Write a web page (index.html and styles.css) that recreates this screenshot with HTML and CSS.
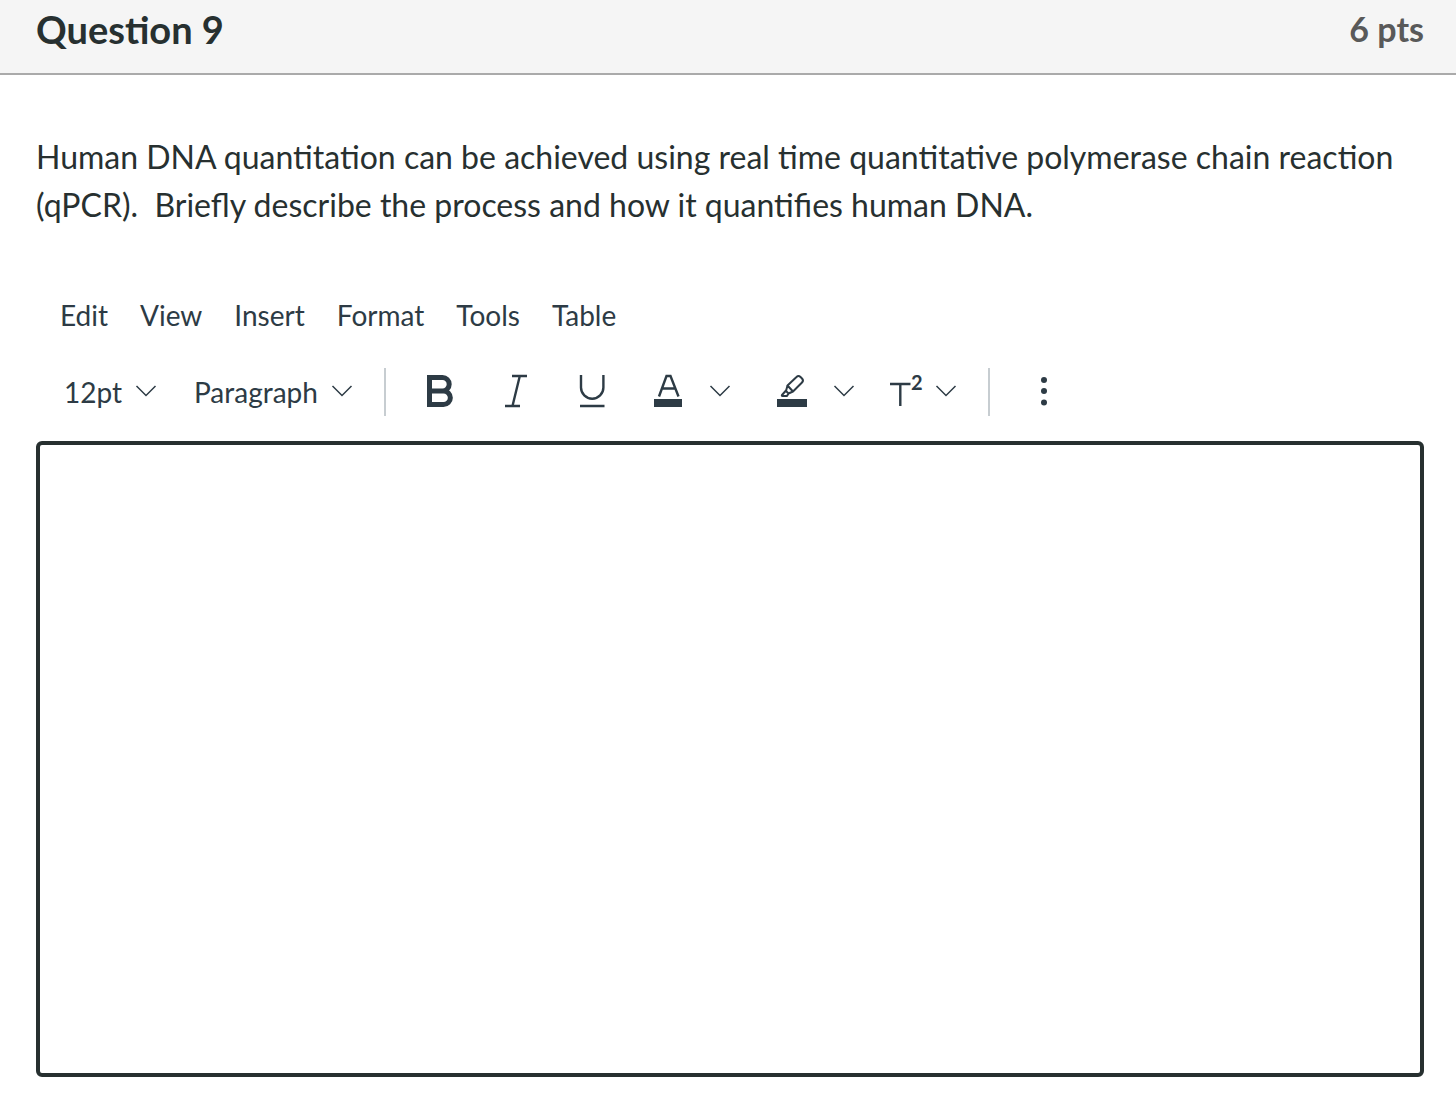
FILE: index.html
```html
<!DOCTYPE html>
<html lang="en">
<head>
  <meta charset="utf-8">
  <meta name="viewport" content="width=device-width, initial-scale=1">
  <title>Question 9</title>
  <link rel="stylesheet" href="styles.css">
</head>
<body>
  <header class="question-header">
    <h1 class="question-name">Question 9</h1>
    <span class="question-points">6 pts</span>
  </header>

  <main class="question">
    <p class="question-text" id="questionText">Human DNA quantitation can be achieved using real time quantitative polymerase chain reaction (qPCR).&nbsp; Briefly describe the process and how it quantifies human DNA.</p>

    <div class="menubar" role="menubar">
      <button type="button" role="menuitem">Edit</button>
      <button type="button" role="menuitem">View</button>
      <button type="button" role="menuitem">Insert</button>
      <button type="button" role="menuitem">Format</button>
      <button type="button" role="menuitem">Tools</button>
      <button type="button" role="menuitem">Table</button>
    </div>

    <div class="toolbar" role="toolbar">
      <div class="picker">
        <select aria-label="Font size">
          <option>12pt</option>
        </select>
        <svg class="chevron" viewBox="0 0 20 12"><path d="M.5 0 10 9.500 19.500 0"/></svg>
      </div>
      <div class="picker">
        <select aria-label="Block format">
          <option>Paragraph</option>
        </select>
        <svg class="chevron" viewBox="0 0 20 12"><path d="M.5 0 10 9.500 19.500 0"/></svg>
      </div>

      <span class="divider"></span>

      <button type="button" class="tool" aria-label="Bold">
        <svg class="icon" viewBox="0 0 48 48"><path class="heavy" d="M13.500 22.900H26.500a6.700 6.700 0 0 0 0-13.400H13.500v27.100h14a6.850 6.850 0 0 0 0-13.700H26"/></svg>
      </button>
      <button type="button" class="tool" aria-label="Italic">
        <svg class="icon" viewBox="0 0 48 48"><path d="M20 8h15M13 38h15M27.800 8l-7.300 30"/></svg>
      </button>
      <button type="button" class="tool" aria-label="Underline">
        <svg class="icon" viewBox="0 0 48 48"><path d="M13 7v12.500a11.200 11.200 0 0 0 22.400 0V7M12 38h24.500"/></svg>
      </button>

      <div class="split">
        <button type="button" class="tool" aria-label="Text color">
          <svg class="icon" viewBox="0 0 48 48"><path d="M15 28.500 22.500 8h4L34.500 28.500M17.800 20.500h13.400"/><path class="solid" d="M10 31h28v8H10z"/></svg>
        </button>
        <button type="button" class="arrow" aria-label="Text color options">
          <svg class="chevron" viewBox="0 0 20 12"><path d="M.5 0 10 9.500 19.500 0"/></svg>
        </button>
      </div>
      <div class="split">
        <button type="button" class="tool" aria-label="Background color">
          <svg class="icon" viewBox="0 0 48 48"><path class="pen" d="M19.500 17.500 28.500 9q2-2 4 0l1.500 1.500q2 2 0 4L25 23.500zM19.500 17.500l-1.500 5.500 2.500 2.500 4.500-2M18 22.500l-4 4.500q-.5 1 .5 1h4.500l1.500-2.500"/><path class="solid" d="M9 31h30v8H9z"/></svg>
        </button>
        <button type="button" class="arrow" aria-label="Background color options">
          <svg class="chevron" viewBox="0 0 20 12"><path d="M.5 0 10 9.500 19.500 0"/></svg>
        </button>
      </div>
      <button type="button" class="tool script" aria-label="Superscript and subscript">
        <svg class="icon" viewBox="0 0 48 48"><path d="M8 16h20.500M18.300 16v22"/><text x="29" y="22">2</text></svg>
        <svg class="chevron" viewBox="0 0 20 12"><path d="M.5 0 10 9.500 19.500 0"/></svg>
      </button>

      <span class="divider"></span>

      <button type="button" class="tool" aria-label="More">
        <svg class="icon" viewBox="0 0 48 48"><g class="solid"><circle cx="24" cy="12" r="3"/><circle cx="24" cy="23" r="3"/><circle cx="24" cy="34.500" r="3"/></g></svg>
      </button>
    </div>

    <textarea class="answer" aria-labelledby="questionText"></textarea>
  </main>
</body>
</html>
```
FILE: styles.css
```css
* {
  box-sizing: border-box;
}

body {
  display: flex;
  flex-direction: column;
  min-height: 100vh;
  margin: 0;
  font-family: Lato, "Liberation Sans", sans-serif;
  color: #273030;
  background-color: #fff;
}

button,
select {
  margin: 0;
  padding: 0;
  border: none;
  background: none;
  font: inherit;
  color: inherit;
  cursor: pointer;
}

.question-header {
  display: flex;
  justify-content: space-between;
  align-items: center;
  padding: 5px 32px 20px 36px;
  background-color: #f5f5f5;
  border-bottom: 2px solid #aaa;
}

.question-name {
  margin: 0;
  font-size: 38px;
  line-height: 48px;
  font-weight: bold;
}

.question-points {
  font-size: 34px;
  line-height: 48px;
  font-weight: bold;
  color: #595959;
}

.question {
  flex: 1;
  display: flex;
  flex-direction: column;
  padding: 58px 32px 27px 36px;
}

.question-text {
  margin: 0 0 62px;
  font-size: 32px;
  line-height: 48px;
}

.menubar {
  display: flex;
  flex-wrap: wrap;
  padding-left: 8px;
  font-size: 28px;
  line-height: 48px;
  color: #2d3b45;
}

.menubar button {
  padding: 0 16px;
}

.toolbar {
  display: flex;
  flex-wrap: wrap;
  align-items: center;
  margin: 29px 0 25px;
  padding-left: 28px;
  font-size: 28px;
  line-height: 48px;
  color: #2d3b45;
}

/* the chevron shares the grid cell of its select */
.picker {
  display: grid;
  align-items: center;
  margin-right: 38px;
}

.picker + .divider {
  margin-left: -6px;
}

.picker select,
.picker .chevron {
  grid-area: 1 / 1;
}

.picker select {
  appearance: none;
  height: 48px;
  padding: 0 34px 2px 0;
}

.picker:first-child select {
  padding-right: 33px;
}

.picker .chevron {
  justify-self: end;
  pointer-events: none;
}

.divider {
  width: 2px;
  height: 48px;
  margin: 0 16px;
  background-color: #c7cdd1;
}

.tool {
  display: flex;
  align-items: center;
  padding: 0 14px;
}

.script {
  gap: 6px;
  padding-right: 16px;
}

.split {
  display: flex;
  margin-right: 10px;
}

.arrow {
  display: flex;
  align-items: center;
  padding: 0 14px 0 4px;
}

.split + .script {
  margin-left: -10px;
}

.icon {
  width: 48px;
  height: 48px;
  fill: none;
  stroke: currentColor;
  stroke-width: 2.4;
}

.icon .heavy {
  stroke-width: 5;
}

.icon .pen {
  stroke-width: 2;
  stroke-linejoin: round;
}

.icon .solid,
.icon text {
  fill: currentColor;
  stroke: none;
}

.icon text {
  font-size: 20px;
  font-weight: bold;
}

.chevron {
  width: 20px;
  height: 12px;
  overflow: visible;
  fill: none;
  stroke: currentColor;
  stroke-width: 1.5;
}

.answer {
  flex: 1;
  width: 100%;
  min-height: 240px;
  padding: 16px;
  border: 4px solid #273030;
  border-radius: 6px;
  outline: none;
  resize: none;
  font: inherit;
  font-size: 32px;
  color: inherit;
}
```
